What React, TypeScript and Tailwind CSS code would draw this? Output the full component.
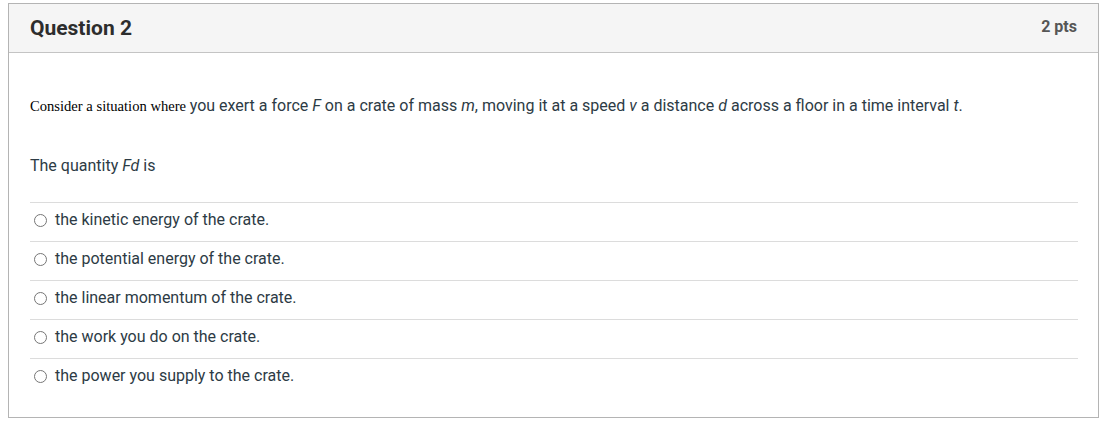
const answers = [
  "the kinetic energy of the crate.",
  "the potential energy of the crate.",
  "the linear momentum of the crate.",
  "the work you do on the crate.",
  "the power you supply to the crate.",
];

export default function App() {
  return (
    <div className="w-[1116px] h-[426px] bg-white pt-[3px] pl-[8px] font-['Roboto',sans-serif] text-[#2d3b45]">
      <div className="w-[1091px] h-[415px] border border-[#b4b4b4]">
        <div className="h-[49px] bg-[#f5f5f5] border-b border-[#c4c4c4] flex items-center justify-between pl-[21px] pr-[21px]">
          <h2 className="text-[21px] font-bold text-[#2d2d2d] mt-[1px]">Question 2</h2>
          <span className="text-[16px] font-bold text-[#565656] -mt-[3px]">2 pts</span>
        </div>
        <div className="px-[21px]">
          <p className="mt-[42px] text-[16px] leading-[22px]">
            <span className="font-['Liberation_Serif',serif] text-[14.6px] text-black">Consider a situation where </span>
            you exert a force <i>F</i> on a crate of mass <i>m</i>, moving it at a speed <i>v</i> a distance <i>d</i> across a floor in a time interval <i>t</i>.
          </p>
          <p className="mt-[38px] text-[16px] leading-[22px]">
            The quantity <i>Fd</i> is
          </p>
          <div className="mt-[25px] w-[1048px]">
            {answers.map((a) => (
              <div key={a} className="h-[39px] border-t border-[#dcdcdc] flex items-start pt-[6px] pl-[4px] gap-[8px]">
                <span className="w-[13px] h-[13px] mt-[5px] rounded-full border border-[#767676] bg-white shrink-0" />
                <span className="text-[16px] leading-[22px]">{a}</span>
              </div>
            ))}
          </div>
        </div>
      </div>
    </div>
  );
}
